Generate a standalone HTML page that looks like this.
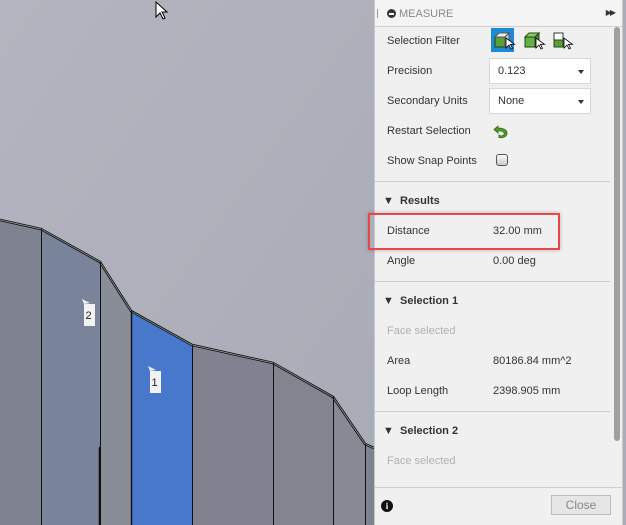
<!DOCTYPE html>
<html><head><meta charset="utf-8"><style>
*{margin:0;padding:0;box-sizing:border-box}
body{width:626px;height:525px;overflow:hidden;position:relative;font-family:"Liberation Sans",sans-serif;font-size:11px;color:#333;background:#abadb8}
#vp{position:absolute;left:0;top:0}
#panel{position:absolute;left:374px;top:0;width:249px;height:525px;background:#f0f0f0;border-left:1px solid #c8c8c8;border-right:1px solid #c8c8c8}
.hdr{height:27px;border-bottom:1px solid #cfcfcf;background:#f4f4f4;position:relative}
.hdr .t{position:absolute;left:24px;top:8px;color:#8a8a8a;font-size:11px}
.row{position:absolute;left:12px;width:220px;font-size:11px;color:#333;white-space:nowrap}
.val{position:absolute;left:106px;top:0;white-space:nowrap}
.sec{position:absolute;left:8px;font-weight:bold;font-size:11px}
.sep{position:absolute;left:0;width:235px;height:1px;background:#cfcfcf}
.sel{position:absolute;left:114px;width:102px;height:26px;background:#fff;border:1px solid #d6d6d6}
.sel span{position:absolute;left:8px;top:6px}
.sel i{position:absolute;right:6px;top:11px;border-left:3.5px solid transparent;border-right:3.5px solid transparent;border-top:4px solid #333}
.gray{color:#b0b0b0}
</style></head><body>
<svg id="vp" width="374" height="525">
<defs><linearGradient id="bg" x1="0" y1="0" x2="1" y2="1"><stop offset="0" stop-color="#b3b4bf"/><stop offset="1" stop-color="#a9abb6"/></linearGradient></defs>
<rect width="374" height="525" fill="url(#bg)"/>
<polygon points="0,220 41,229 41,525 0,525" fill="#7f838f"/>
<polygon points="41,229 100,262 100,525 41,525" fill="#798399"/>
<polygon points="100,262 131,311 131,525 100,525" fill="#898d98"/>
<polygon points="131,311 192,345 192,525 131,525" fill="#4878cc"/>
<polygon points="192,345 273,363 273,525 192,525" fill="#80838f"/>
<polygon points="273,363 333,397 333,525 273,525" fill="#82858f"/>
<polygon points="333,397 365,444 365,525 333,525" fill="#878a94"/>
<polygon points="365,444 374,448 374,525 365,525" fill="#80838f"/>
<polyline points="0,220 41,229 100,262 131,311 192,345 273,363 333,397 365,444 374,448" fill="none" stroke="#111" stroke-width="2.5"/>
<polyline points="0,220 41,229 100,262 131,311 192,345 273,363 333,397 365,444 374,448" fill="none" stroke="#9aa" stroke-width="0.7"/>
<g stroke="#111" stroke-width="1"><line x1="41.5" y1="229" x2="41.5" y2="525"/><line x1="100.5" y1="262" x2="100.5" y2="525"/><line x1="131.5" y1="311" x2="131.5" y2="525" stroke-width="1.5"/><line x1="192.5" y1="345" x2="192.5" y2="525"/><line x1="273.5" y1="363" x2="273.5" y2="525"/><line x1="333.5" y1="397" x2="333.5" y2="525"/><line x1="365.5" y1="444" x2="365.5" y2="525"/><line x1="99.5" y1="447" x2="99.5" y2="525" stroke-width="1.5"/></g>
<rect x="84" y="304" width="11" height="22" fill="#f2f2f2"/><polygon points="82,299 90,303 84,304" fill="#eee"/>
<text x="85.5" y="319" font-size="11" font-family="Liberation Sans" fill="#222">2</text>
<rect x="150" y="371" width="11" height="22" fill="#f2f2f2"/><polygon points="148,366 156,370 150,371" fill="#eee"/>
<text x="151.5" y="386" font-size="11" font-family="Liberation Sans" fill="#222">1</text>
<path d="M156,2 L156,17 L160,13 L163,19 L165,18 L162,12 L167,12 Z" fill="#fff" stroke="#000" stroke-width="1"/>
</svg>
<div id="panel">
<div class="hdr">
<div style="position:absolute;left:2px;top:9px;width:1px;height:9px;background:#999"></div>
<div style="position:absolute;left:12px;top:9px;width:9px;height:9px;border-radius:50%;background:#333"><div style="position:absolute;left:2px;top:4px;width:5px;height:1.5px;background:#fff"></div></div>
<div class="t">MEASURE</div>
<div style="position:absolute;right:8px;top:8px;font-size:8px;color:#333;letter-spacing:-2px">▶▶</div>
</div>
<div style="position:absolute;left:239px;top:27px;width:6px;height:414px;background:#a0a0a0;border-radius:3px"></div>
<div class="row" style="top:35px">Selection Filter</div>
<div style="position:absolute;left:116px;top:28px;width:23px;height:24px;background:#1e8ad6"></div>
<svg style="position:absolute;left:116px;top:28px" width="90" height="24">
<g><rect x="4" y="9" width="10" height="10" fill="#5c9e3c" stroke="#1b4a0d"/><polygon points="4,9 8,5 18,5 14,9" fill="#eee" stroke="#555"/><polygon points="14,9 18,5 18,15 14,19" fill="#ccc" stroke="#555"/><path d="M15,10 l0,10 3,-3 2,4 1.5,-.7 -2,-4 4,0z" fill="#fff" stroke="#000" stroke-width=".8"/></g>
<g transform="translate(30,0)"><rect x="4" y="9" width="10" height="10" fill="#6aae48" stroke="#1b4a0d"/><polygon points="4,9 8,5 18,5 14,9" fill="#8ccc6a" stroke="#1b4a0d"/><polygon points="14,9 18,5 18,15 14,19" fill="#4f8d31" stroke="#1b4a0d"/><path d="M15,10 l0,10 3,-3 2,4 1.5,-.7 -2,-4 4,0z" fill="#fff" stroke="#000" stroke-width=".8"/></g>
<g transform="translate(58,0)"><rect x="5" y="5" width="9" height="7" fill="#fff" stroke="#333"/><rect x="5" y="12" width="9" height="7" fill="#5c9e3c" stroke="#1b4a0d"/><path d="M15,10 l0,10 3,-3 2,4 1.5,-.7 -2,-4 4,0z" fill="#fff" stroke="#000" stroke-width=".8"/></g>
</svg>
<div class="row" style="top:65px">Precision</div>
<div class="sel" style="top:58px"><span>0.123</span><i></i></div>
<div class="row" style="top:95px">Secondary Units</div>
<div class="sel" style="top:88px"><span>None</span><i></i></div>
<div class="row" style="top:125px">Restart Selection</div>
<svg style="position:absolute;left:118px;top:123px" width="16" height="16"><path d="M5,3 L1,6.5 L5,10 L5,8 C9,7.5 12,9 11,11.5 C10,13.5 7,13 6,12 L6,14.5 C10,15.5 14,13.5 14,10 C14,6.5 10,5 5,5 Z" fill="#4f9a2c" stroke="#2d6a14" stroke-width=".8"/></svg>
<div class="row" style="top:155px">Show Snap Points</div>
<div style="position:absolute;left:121px;top:154px;width:12px;height:12px;border:1px solid #555;border-radius:3px;background:linear-gradient(#fafafa,#ccc)"></div>
<div class="sep" style="top:181px"></div>
<div class="sec" style="top:195px">▼&nbsp; Results</div>
<div class="row" style="top:225px">Distance<span class="val">32.00 mm</span></div>
<div class="row" style="top:255px">Angle<span class="val">0.00 deg</span></div>
<div class="sep" style="top:281px"></div>
<div class="sec" style="top:295px">▼&nbsp; Selection 1</div>
<div class="row gray" style="top:325px">Face selected</div>
<div class="row" style="top:355px">Area<span class="val">80186.84 mm^2</span></div>
<div class="row" style="top:385px">Loop Length<span class="val">2398.905 mm</span></div>
<div class="sep" style="top:411px"></div>
<div class="sec" style="top:425px">▼&nbsp; Selection 2</div>
<div class="row gray" style="top:455px">Face selected</div>
<div style="position:absolute;left:0;top:487px;width:247px;height:38px;background:#f0f0f0;border-top:1px solid #d0d0d0">
<div style="position:absolute;left:6px;top:12px;width:12px;height:12px;border-radius:50%;background:#111;color:#fff;font-size:9px;font-weight:bold;text-align:center;line-height:12px;font-family:'Liberation Serif',serif">i</div>
<div style="position:absolute;left:176px;top:7px;width:60px;height:20px;border:1px solid #bbb;background:#e6e6e6;color:#888;font-size:12px;text-align:center;line-height:18px">Close</div>
</div>
</div>
<div style="position:absolute;left:368px;top:213px;width:192px;height:37px;border:2px solid #e8474a;box-shadow:0 0 4px rgba(0,0,0,.25)"></div>
</body></html>
